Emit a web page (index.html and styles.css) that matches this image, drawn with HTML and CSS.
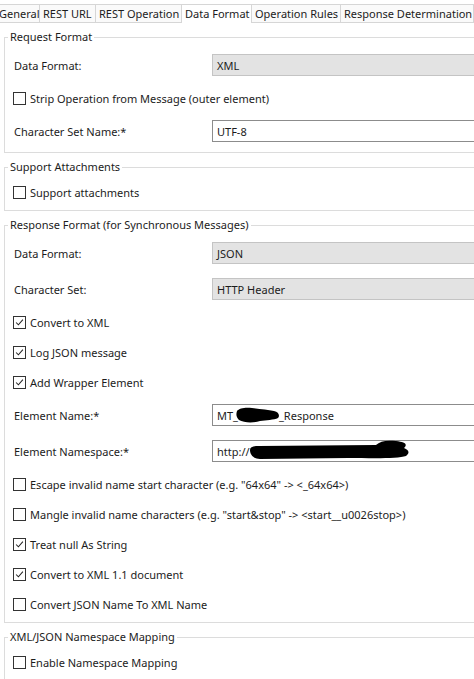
FILE: index.html
```html
<!DOCTYPE html>
<html lang="en">
<head>
<meta charset="utf-8">
<title>Data Format</title>
<link rel="stylesheet" href="styles.css">
</head>
<body>
<div class="tabs">
  <div class="tab">General</div>
  <div class="tab">REST URL</div>
  <div class="tab">REST Operation</div>
  <div class="tab active">Data Format</div>
  <div class="tab">Operation Rules</div>
  <div class="tab">Response Determination</div>
</div>

<fieldset class="group">
  <legend>Request Format</legend>
  <div class="row field">
    <span class="label">Data Format:</span>
    <span class="input ro">XML</span>
  </div>
  <div class="row check">
    <span class="box"></span><span>Strip Operation from Message (outer element)</span>
  </div>
  <div class="row field">
    <span class="label">Character Set Name:*</span>
    <span class="input">UTF-8</span>
  </div>
</fieldset>

<fieldset class="group">
  <legend>Support Attachments</legend>
  <div class="row check">
    <span class="box"></span><span>Support attachments</span>
  </div>
</fieldset>

<fieldset class="group">
  <legend>Response Format (for Synchronous Messages)</legend>
  <div class="row field">
    <span class="label">Data Format:</span>
    <span class="input ro">JSON</span>
  </div>
  <div class="row field">
    <span class="label">Character Set:</span>
    <span class="input ro">HTTP Header</span>
  </div>
  <div class="row check">
    <span class="box"><svg viewBox="0 0 13 13" class="tick"><path d="M2.5 6.5 L5.2 9.3 L10.5 3.2"/></svg></span><span>Convert to XML</span>
  </div>
  <div class="row check">
    <span class="box"><svg viewBox="0 0 13 13" class="tick"><path d="M2.5 6.5 L5.2 9.3 L10.5 3.2"/></svg></span><span>Log JSON message</span>
  </div>
  <div class="row check">
    <span class="box"><svg viewBox="0 0 13 13" class="tick"><path d="M2.5 6.5 L5.2 9.3 L10.5 3.2"/></svg></span><span>Add Wrapper Element</span>
  </div>
  <div class="row field">
    <span class="label">Element Name:*</span>
    <span class="input">MT_<svg class="blob1" viewBox="0 0 44 16"><path d="M1 4 C3 1 10 0 16 1 C24 2 32 3 38 4 C43 5 44 9 42 11 C38 13 30 13 24 14 C18 16 8 16 3 13 C0 10 0 7 1 4 Z"/></svg>_Response</span>
  </div>
  <div class="row field">
    <span class="label">Element Namespace:*</span>
    <span class="input">http://<svg class="blob2" viewBox="0 0 162 24"><path d="M2 13 C2 10 5 9 11 9 L128 8 C132 4 138 3 148 4 C157 5 160 7 156 11 C161 13 162 16 158 19 C150 22 122 21 100 21 L12 22 C5 22 2 17 2 13 Z"/></svg></span>
  </div>
  <div class="row check">
    <span class="box"></span><span>Escape invalid name start character (e.g. "64x64" -&gt; &lt;_64x64&gt;)</span>
  </div>
  <div class="row check">
    <span class="box"></span><span>Mangle invalid name characters (e.g. "start&amp;stop" -&gt; &lt;start__u0026stop&gt;)</span>
  </div>
  <div class="row check">
    <span class="box"><svg viewBox="0 0 13 13" class="tick"><path d="M2.5 6.5 L5.2 9.3 L10.5 3.2"/></svg></span><span>Treat null As String</span>
  </div>
  <div class="row check">
    <span class="box"><svg viewBox="0 0 13 13" class="tick"><path d="M2.5 6.5 L5.2 9.3 L10.5 3.2"/></svg></span><span>Convert to XML 1.1 document</span>
  </div>
  <div class="row check">
    <span class="box"></span><span>Convert JSON Name To XML Name</span>
  </div>
</fieldset>

<fieldset class="group">
  <legend>XML/JSON Namespace Mapping</legend>
  <div class="row check">
    <span class="box"></span><span>Enable Namespace Mapping</span>
  </div>
</fieldset>
</body>
</html>
```

FILE: styles.css
```css
html, body {
  margin: 0;
  padding: 0;
  background: #ffffff;
}
body {
  width: 474px;
  height: 679px;
  overflow: hidden;
  font-family: "Noto Sans", "Open Sans", sans-serif;
  font-size: 11px;
  color: #1c1c1c;
}

.tabs {
  display: grid;
  grid-template-columns: 42px 56px 86px 70px 89px 133px;
  margin: 4px 0 0 -2px;
  width: 476px;
  height: 18px;
  border-bottom: 1px solid #d6d6d6;
}
.tab {
  height: 17px;
  line-height: 17px;
  padding: 0 0 0 3px;
  border-top: 1px solid #d6d6d6;
  border-right: 1px solid #d6d6d6;
  background: #fafafa;
  white-space: nowrap;
  overflow: visible;
}
.tab:first-child {
  padding-left: 1px;
}
.tab.active {
  background: #ffffff;
  height: 18px;
}

.group {
  margin: 6px 0 0 4px;
  padding: 2px 0 3px 9px;
  border: 1px solid #dcdcdc;
  border-right: none;
  width: 560px;
  min-width: 0;
  box-sizing: border-box;
}
.group legend {
  margin-left: -6px;
  padding: 0 2px;
  line-height: 16px;
  font-size: 11px;
}

.row {
  display: flex;
  align-items: center;
  white-space: nowrap;
}
.row.field {
  height: 36px;
}
.row.check {
  height: 30px;
}
.label {
  flex: none;
  width: 198px;
}
.input {
  flex: none;
  display: flex;
  align-items: center;
  width: 320px;
  height: 22px;
  box-sizing: border-box;
  padding-left: 4px;
  border: 1px solid #8c8c8c;
  background: #ffffff;
}
.input.ro {
  background: #e3e3e3;
  border-color: #c4c4c4;
}

.box {
  flex: none;
  display: inline-flex;
  width: 13px;
  height: 13px;
  box-sizing: border-box;
  border: 1px solid #333333;
  background: #ffffff;
  margin: 0 4px 0 -1px;
}
.tick {
  width: 11px;
  height: 11px;
  fill: none;
  stroke: #222222;
  stroke-width: 1.2;
}

.blob1 {
  width: 44px;
  height: 16px;
  margin: 0 -1px 0 -2px;
  fill: #000000;
}
.blob2 {
  width: 162px;
  height: 24px;
  margin: -4px 0 0 -2px;
  fill: #000000;
  overflow: visible;
}
```
